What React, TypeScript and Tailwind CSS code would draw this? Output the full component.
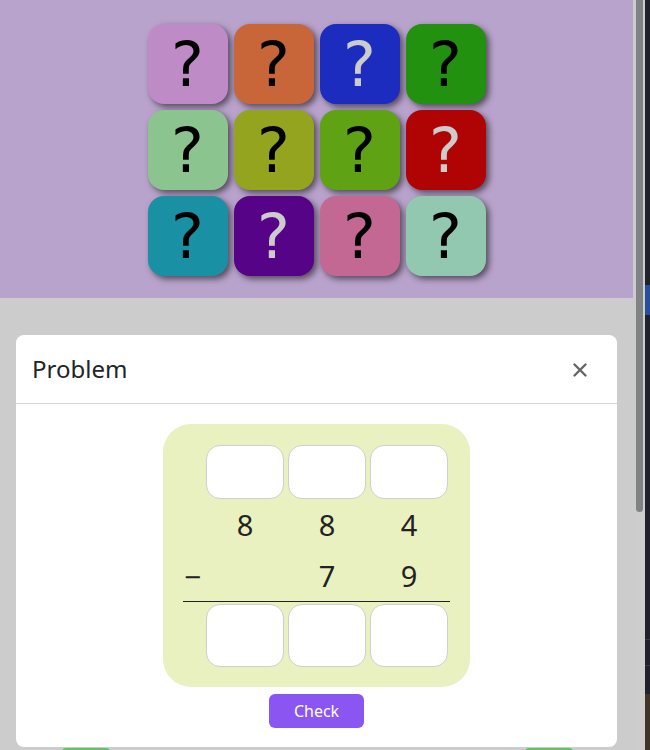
import { useState } from 'react'

type Tile = { bg: string; mark: string }

const tiles: Tile[] = [
  { bg: 'bg-[#efaef9]', mark: 'text-black' },
  { bg: 'bg-[#fa8049]', mark: 'text-black' },
  { bg: 'bg-[#2337ef]', mark: 'text-white' },
  { bg: 'bg-[#2bb615]', mark: 'text-black' },
  { bg: 'bg-[#aff5b3]', mark: 'text-black' },
  { bg: 'bg-[#b9ce26]', mark: 'text-black' },
  { bg: 'bg-[#77cc19]', mark: 'text-black' },
  { bg: 'bg-[#dc0606]', mark: 'text-white' },
  { bg: 'bg-[#21b4ce]', mark: 'text-black' },
  { bg: 'bg-[#6c04ab]', mark: 'text-white' },
  { bg: 'bg-[#f482b8]', mark: 'text-black' },
  { bg: 'bg-[#b8fadc]', mark: 'text-black' },
]

function DigitInput({ tall }: { tall?: boolean }) {
  const [value, setValue] = useState('')
  return (
    <input
      value={value}
      onChange={(e) => setValue(e.target.value.slice(-1))}
      className={`w-[78px] ${tall ? 'h-[63px]' : 'h-[54px]'} rounded-[14px] border border-[#cfcfcf] bg-white text-center text-[28px] outline-none`}
    />
  )
}

function Problem() {
  const top = ['8', '8', '4']
  const bottom = ['', '7', '9']
  return (
    <div className="mx-auto w-[307px] rounded-[28px] bg-[#e9f1c1] px-5 pt-[21px] pb-[20px] text-[#222] font-['Noto_Sans',sans-serif]">
      <div className="grid grid-cols-[19px_78px_78px_78px] gap-x-1">
        <div />
        <DigitInput />
        <DigitInput />
        <DigitInput />

        <div className="h-[52px]" />
        {top.map((d, i) => (
          <div key={i} className="flex h-[52px] items-center justify-center text-[29px]">
            {d}
          </div>
        ))}

        <div className="flex h-[50px] items-center justify-center text-[30px]">−</div>
        {bottom.map((d, i) => (
          <div key={i} className="flex h-[50px] items-center justify-center text-[29px]">
            {d}
          </div>
        ))}
      </div>
      <div className="h-px w-full bg-[#222]" />
      <div className="mt-[2px] grid grid-cols-[19px_78px_78px_78px] gap-x-1">
        <div />
        <DigitInput tall />
        <DigitInput tall />
        <DigitInput tall />
      </div>
    </div>
  )
}

export default function App() {
  return (
    <div className="flex h-[750px] w-[650px] overflow-hidden bg-[#cccccc]">
      {/* page */}
      <div className="relative h-full w-[636px] shrink-0 bg-white">
        <div className="flex h-[298px] w-[633px] justify-center bg-[#e7ccff] pt-6">
          <div className="grid grid-cols-4 gap-[6px] self-start">
            {tiles.map((t, i) => (
              <div
                key={i}
                className={`flex h-20 w-20 items-center justify-center rounded-[16px] ${t.bg} shadow-[3px_3px_6px_rgba(0,0,0,0.55)]`}
              >
                <span className={`pt-[2px] text-[62px] leading-none font-['DejaVu_Sans',sans-serif] ${t.mark}`}>?</span>
              </div>
            ))}
          </div>
        </div>
        <div className="flex justify-between px-[62px] pt-[450px] pr-[63px]">
          <div className="h-10 w-12 rounded bg-[#77f477]" />
          <div className="h-10 w-12 rounded bg-[#77f477]" />
        </div>

        {/* dialog backdrop */}
        <div className="absolute inset-0 bg-black/20">
          <div className="absolute left-4 top-[335px] w-[601px] rounded-lg bg-white font-['Noto_Sans',sans-serif]">
            <div className="flex h-[69px] items-center justify-between border-b border-[#d4d4d4] pl-4 pr-[30px]">
              <h2 className="text-[24px] text-[#212529]">Problem</h2>
              <svg width="14" height="14" viewBox="0 0 14 14" className="mt-[2px] text-[#666]">
                <path d="M1.5 1.5 L12.5 12.5 M12.5 1.5 L1.5 12.5" stroke="currentColor" strokeWidth="2.4" strokeLinecap="round" />
              </svg>
            </div>
            <div className="flex flex-col items-center pt-5 pb-[19px]">
              <Problem />
              <button className="mt-[7px] h-[34px] w-[95px] rounded-md bg-[#8b55f1] text-[16px] text-white">
                Check
              </button>
            </div>
          </div>
        </div>
      </div>

      {/* scrollbar */}
      <div className="h-full w-[9px] shrink-0 bg-[#cdcdcd]">
        <div className="h-[512px] w-[7px] rounded-b bg-[#7f8383]" />
      </div>
      <div className="flex h-full w-[5px] shrink-0 flex-col bg-[#20212a]">
        <div className="mt-[285px] h-[30px] bg-[#24509a]" />
        <div className="mt-[324px] h-px bg-[#3a3a44]" />
        <div className="mt-[25px] h-px bg-[#3a3a44]" />
        <div className="mt-[28px] flex-1 bg-[#3e3522]" />
      </div>
    </div>
  )
}
